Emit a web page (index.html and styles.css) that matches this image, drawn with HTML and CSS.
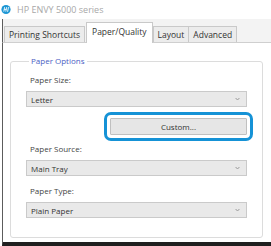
FILE: index.html
```html
<!DOCTYPE html>
<html>
<head>
<meta charset="utf-8">
<link rel="stylesheet" href="styles.css">
</head>
<body>
<div class="window">
  <div class="titlebar">
    <svg class="appicon" width="11" height="11" viewBox="0 0 11 11">
      <circle cx="5" cy="5.5" r="4.6" fill="#1c96d4"/>
      <path d="M3.6 3.2 L2.8 7.6 M3.2 5.4 L5.4 5.4 M5.6 3.2 L4.8 7.6 M6.6 7.8 L7.4 3.4 L8.2 3.6" stroke="#fff" stroke-width="0.9" fill="none"/>
    </svg>
    <span class="title">HP ENVY 5000 series</span>
  </div>
  <div class="tabstrip">
    <div class="tab">Printing Shortcuts</div>
    <div class="tab active">Paper/Quality</div>
    <div class="tab">Layout</div>
    <div class="tab">Advanced</div>
  </div>
  <div class="page">
    <fieldset class="group">
      <legend class="legend">Paper Options</legend>
      <div class="label first">Paper Size:</div>
      <div class="select"><span>Letter</span><svg class="chev" width="5" height="4" viewBox="0 0 5 4"><path d="M0.6 1 L2.5 3 L4.4 1" stroke="#9a9a9a" stroke-width="1" fill="none"/></svg></div>
      <div class="btnrow"><div class="button">Custom...</div></div>
      <div class="label second">Paper Source:</div>
      <div class="select"><span>Main Tray</span><svg class="chev" width="5" height="4" viewBox="0 0 5 4"><path d="M0.6 1 L2.5 3 L4.4 1" stroke="#9a9a9a" stroke-width="1" fill="none"/></svg></div>
      <div class="label third">Paper Type:</div>
      <div class="select"><span>Plain Paper</span><svg class="chev" width="5" height="4" viewBox="0 0 5 4"><path d="M0.6 1 L2.5 3 L4.4 1" stroke="#9a9a9a" stroke-width="1" fill="none"/></svg></div>
    </fieldset>
  </div>
</div>
</body>
</html>
```
FILE: styles.css
```css
html, body {
  margin: 0;
  padding: 0;
  background: #ffffff;
}
body {
  width: 271px;
  height: 246px;
  overflow: hidden;
  font-family: "Open Sans", "Noto Sans", sans-serif;
  color: #333;
}
.window {
  height: 246px;
  display: flex;
  flex-direction: column;
}
.titlebar {
  height: 19px;
  display: flex;
  align-items: center;
  padding-left: 1px;
  box-sizing: border-box;
  background: #fff;
}
.appicon {
  flex: none;
}
.title {
  margin-left: 5px;
  font-size: 9px;
  color: #a8a8a8;
  line-height: 12px;
}
.tabstrip {
  margin-left: 2px;
  border-left: 1px solid #5c5c5c;
  height: 24px;
  box-sizing: border-box;
  background: #f3f3f3;
  display: flex;
  align-items: flex-end;
  padding-left: 1px;
  border-bottom: 1px solid #cfcfcf;
}
.tab {
  font-size: 8.5px;
  line-height: 15px;
  height: 16px;
  box-sizing: border-box;
  padding: 0 4px;
  background: #ececec;
  border: 1px solid #c9c9c9;
  border-bottom: none;
  color: #333;
}
.tab + .tab {
  border-left: none;
}
.tab.active {
  background: #fff;
  height: 21px;
  line-height: 17px;
  margin-bottom: -1px;
  border-left: 1px solid #c9c9c9;
  margin-left: 1px;
  padding: 0 5px;
}
.tab.active + .tab {
  border-left: 1px solid #c9c9c9;
}
.page {
  flex: 1;
  margin-left: 2px;
  border-left: 1px solid #5c5c5c;
  border-bottom: 4px solid #1f1f1f;
  background: #fff;
  padding: 12px 8px 4px 7px;
  display: flex;
  flex-direction: column;
}
.group {
  flex: 1;
  margin: 0;
  border: 1px solid #dcdcdc;
  border-radius: 3px;
  padding: 0 15px 0 15px;
  min-width: 0;
}
.legend {
  font-size: 8px;
  line-height: 12px;
  color: #4b5ec3;
  padding: 0 2px;
  margin-left: 3px;
}
.label {
  font-size: 8px;
  line-height: 12px;
  padding-left: 4px;
  color: #444;
}
.label.first { margin-top: 7px; }
.label.second { margin-top: 8px; }
.label.third { margin-top: 9px; }
.select {
  margin-top: 5px;
  height: 16px;
  box-sizing: border-box;
  background: #e9e9e9;
  border: 1px solid #cacaca;
  display: flex;
  align-items: center;
  justify-content: space-between;
  padding: 0 6px 0 4px;
  font-size: 8px;
  color: #333;
}
.btnrow {
  display: flex;
  justify-content: flex-end;
  margin-top: 11px;
}
.button {
  width: 137px;
  height: 17px;
  box-sizing: border-box;
  background: #e6e6e6;
  border: 1px solid #c0c0c0;
  border-radius: 1px;
  font-size: 8px;
  line-height: 15px;
  text-align: center;
  color: #333;
  outline: 3px solid #1592d6;
  outline-offset: 3px;
}
```
